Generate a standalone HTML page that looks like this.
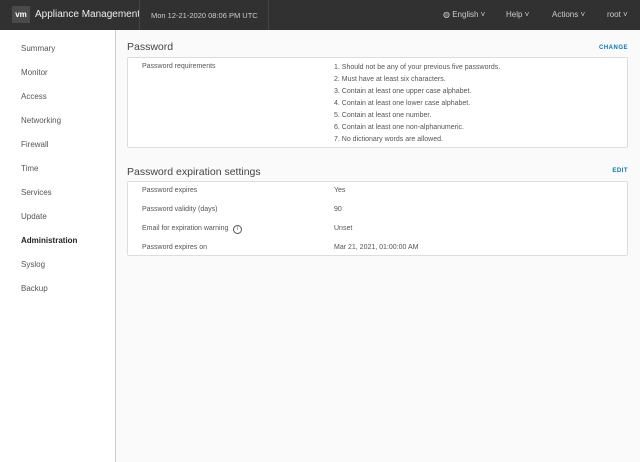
<!DOCTYPE html>
<html><head><style>
*{margin:0;padding:0;box-sizing:border-box}
body{width:640px;height:462px;overflow:hidden;font-family:"Liberation Sans",sans-serif;background:#fafafa;position:relative}
.hdr{position:absolute;left:0;top:0;width:640px;height:30px;background:#313131;color:#fff}
.logo{position:absolute;left:12px;top:6px;width:18px;height:17px;background:#4a4a4a;font-weight:bold;font-size:8px;line-height:17px;text-align:center}
.t{position:absolute;font-size:10px;color:#eee;top:9px}
.sep{position:absolute;top:0;width:1px;height:30px;background:#444}
.side{position:absolute;left:0;top:30px;width:116px;height:432px;background:#fff;border-right:1px solid #ccc}
.side div{position:absolute;left:21px;font-size:8px;color:#555}
.h{position:absolute;left:127px;font-size:10.5px;color:#444}
.lnk{position:absolute;right:12px;font-size:6px;color:#0079b8;letter-spacing:.5px;font-weight:bold}
.card{position:absolute;left:127px;width:501px;background:#fff;border:1px solid #ddd;border-radius:2px}
.s{position:absolute;font-size:7px;color:#555}
</style></head><body>
<div class="hdr">
<div class="logo">vm</div>
<div class="t" style="left:35px;font-size:10px;top:9px">Appliance Management</div>
<div class="sep" style="left:139px"></div>
<div class="t" style="left:151px;font-size:7.5px;top:11px;color:#ccc">Mon 12-21-2020 08:06 PM UTC</div>
<div class="sep" style="left:268px"></div>
<div class="t" style="left:443px;font-size:8px;top:10px;color:#ccc">◍ English ˅</div>
<div class="t" style="left:506px;font-size:8px;top:10px;color:#ccc">Help ˅</div>
<div class="t" style="left:552px;font-size:8px;top:10px;color:#ccc">Actions ˅</div>
<div class="t" style="left:607px;font-size:8px;top:10px;color:#ccc">root ˅</div>
</div>
<div class="side">
<div style="top:14px">Summary</div><div style="top:38px">Monitor</div><div style="top:62px">Access</div>
<div style="top:86px">Networking</div><div style="top:110px">Firewall</div><div style="top:134px">Time</div>
<div style="top:158px">Services</div><div style="top:182px">Update</div>
<div style="top:206px;color:#222;font-weight:bold">Administration</div>
<div style="top:230px">Syslog</div><div style="top:254px">Backup</div>
</div>
<div class="h" style="top:41px">Password</div>
<div class="lnk" style="top:45px">CHANGE</div>
<div class="card" style="top:57px;height:91px"></div>
<div class="s" style="left:142px;top:63px">Password requirements</div>
<div class="s" style="left:334px;top:62px;line-height:12px">1. Should not be any of your previous five passwords.<br>2. Must have at least six characters.<br>3. Contain at least one upper case alphabet.<br>4. Contain at least one lower case alphabet.<br>5. Contain at least one number.<br>6. Contain at least one non-alphanumeric.<br>7. No dictionary words are allowed.</div>
<div class="h" style="top:166px">Password expiration settings</div>
<div class="lnk" style="top:168px">EDIT</div>
<div class="card" style="top:181px;height:75px"></div>
<div class="s" style="left:142px;top:187px">Password expires</div><div class="s" style="left:334px;top:187px">Yes</div>
<div class="s" style="left:142px;top:206px">Password validity (days)</div><div class="s" style="left:334px;top:206px">90</div>
<div class="s" style="left:142px;top:225px">Email for expiration warning <span style="display:inline-block;width:9px;height:9px;border:1px solid #555;border-radius:50%;font-size:6px;text-align:center;line-height:7px;margin-left:3px">i</span></div><div class="s" style="left:334px;top:225px">Unset</div>
<div class="s" style="left:142px;top:244px">Password expires on</div><div class="s" style="left:334px;top:244px">Mar 21, 2021, 01:00:00 AM</div>
</body></html>
